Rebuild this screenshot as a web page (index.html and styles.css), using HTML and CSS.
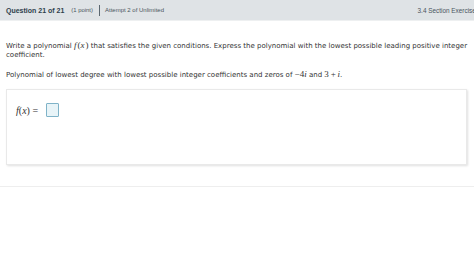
FILE: index.html
```html
<!DOCTYPE html>
<html lang="en">
<head>
  <meta charset="UTF-8" />
  <title>Question 21 of 21</title>
  <link rel="stylesheet" href="styles.css">
</head>
<body>
  <div class="qbar">
    <div class="qbar-left">
      <strong>Question 21 of 21</strong>
      <span class="points">(1 point)</span>
      <span class="sep"></span>
      <span>Attempt 2 of Unlimited</span>
    </div>
    <div class="qbar-right">3.4 Section Exercises</div>
  </div>

  <div class="question">
    <p>Write a polynomial <span class="math">f</span><span class="paren">(</span><span class="math">x</span><span class="paren">)</span> that satisfies the given conditions. Express the polynomial with the lowest possible leading positive integer coefficient.</p>
    <p>Polynomial of lowest degree with lowest possible integer coefficients and zeros of <span class="math-r">&minus;4<i>i</i></span> and <span class="math-r">3&thinsp;+&thinsp;<i>i</i></span>.</p>
  </div>

  <div class="answer">
    <div class="answer-row">
      <span class="fx"><i>f</i>(<i>x</i>) =</span>
      <span class="blank"></span>
    </div>
  </div>

  <div class="bottom-line"></div>
</body>
</html>
```

FILE: styles.css
```css
body {
  margin: 0;
  background: #fff;
  font-family: Verdana, 'DejaVu Sans', sans-serif;
  color: #333;
}

.qbar {
  height: 20px;
  background: #dfe3e6;
  border-bottom: 1px solid #eef0f1;
  display: flex;
  justify-content: space-between;
  align-items: center;
  padding-left: 6px;
  font-family: 'Liberation Sans', Arial, sans-serif;
  font-size: 6px;
  color: #4a5660;
  white-space: nowrap;
  overflow: hidden;
}

.qbar-left {
  display: flex;
  align-items: center;
}

.qbar-left strong {
  font-size: 7px;
  color: #2e3f4c;
  margin-right: 7px;
}

.points {
  font-size: 5.9px;
  margin-right: 6px;
}

.sep {
  width: 1px;
  height: 11px;
  background: #5b6770;
  margin-right: 5px;
}

.qbar-right {
  font-size: 6.4px;
  margin-right: -5px;
}

.question {
  padding: 20px 6px 0;
  font-size: 7px;
  line-height: 9px;
}

.question p {
  margin: 0 0 10px;
}

.question p:last-child {
  margin-bottom: 9px;
}

.math, .math-r, .paren {
  font-family: 'Liberation Serif', 'Times New Roman', serif;
  font-size: 9px;
}

.math {
  font-style: italic;
  padding-right: 1px;
}

.answer {
  margin: 0 7px 0 6px;
  height: 76px;
  border: 1px solid #e9e9e9;
  box-shadow: 1px 1px 2px rgba(0, 0, 0, 0.12);
  padding: 13px 9px;
  box-sizing: border-box;
}

.answer-row {
  display: flex;
  align-items: center;
  gap: 8px;
}

.fx {
  font-family: 'Liberation Serif', serif;
  font-size: 10px;
  color: #333;
}

.blank {
  width: 11px;
  height: 12px;
  border: 1px solid #7fb3c8;
  border-radius: 1px;
  background: #e8f4f8;
}

.bottom-line {
  margin-top: 21px;
  border-top: 1px solid #eee;
}
```
